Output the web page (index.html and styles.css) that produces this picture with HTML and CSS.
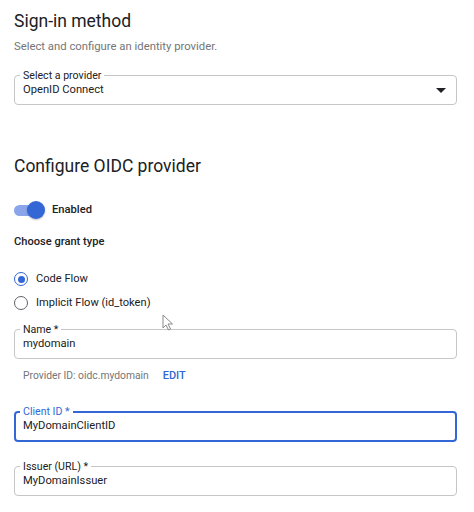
FILE: index.html
```html
<!DOCTYPE html>
<html>
<head>
<meta charset="utf-8">
<link rel="stylesheet" href="styles.css">
</head>
<body>
<main class="page">
  <h1 class="title">Sign-in method</h1>
  <p class="subtitle">Select and configure an identity provider.</p>
  <fieldset class="field field-select">
    <legend class="field-label">Select a provider</legend>
    <div class="field-row">
      <span class="field-value">OpenID Connect</span>
      <svg class="caret" width="10" height="5" viewBox="0 0 10 5"><path d="M0 0h10L5 5z" fill="#202124"/></svg>
    </div>
  </fieldset>

  <h2 class="title title-config">Configure OIDC provider</h2>

  <div class="toggle-row">
    <span class="switch"><span class="switch-track"></span><span class="switch-thumb"></span></span>
    <span class="toggle-label">Enabled</span>
  </div>

  <div class="section-label">Choose grant type</div>

  <div class="radios">
    <div class="radio-row"><span class="radio radio-on"></span><span class="radio-text">Code Flow</span></div>
    <div class="radio-row"><span class="radio"></span><span class="radio-text">Implicit Flow (id_token)</span></div>
  </div>

  <div class="name-block">
    <fieldset class="field field-name">
      <legend class="field-label">Name *</legend>
      <div class="field-row"><span class="field-value">mydomain</span></div>
    </fieldset>
    <svg class="cursor" width="12" height="17" viewBox="0 0 12 17"><path d="M1 1v13l3-3 2.5 5 2-1-2.5-5h4.5z" fill="#fff" stroke="#8a8a8a" stroke-width="1"/></svg>
  </div>

  <div class="provider-id">
    <span class="provider-text">Provider ID: oidc.mydomain</span>
    <span class="edit">EDIT</span>
  </div>

  <fieldset class="field field-focus">
    <legend class="field-label">Client ID *</legend>
    <div class="field-row"><span class="field-value">MyDomainClientID</span></div>
  </fieldset>

  <fieldset class="field field-issuer">
    <legend class="field-label">Issuer (URL) *</legend>
    <div class="field-row"><span class="field-value">MyDomainIssuer</span></div>
  </fieldset>
</main>
</body>
</html>
```

FILE: styles.css
```css
* { box-sizing: border-box; }
html, body { margin: 0; background: #fff; }
body {
  font-family: Roboto, "Liberation Sans", Arial, sans-serif;
  color: #202124;
}
.page {
  display: flex;
  flex-direction: column;
  padding: 9px 17px 0 14px;
}
.title {
  margin: 0;
  font-size: 17.5px;
  line-height: 24px;
  font-weight: 400;
  color: #202124;
}
.title-config { margin-top: 49px; }
.subtitle {
  margin: 6px 0 0;
  font-size: 11.3px;
  line-height: 16px;
  color: #757575;
}
.field {
  margin: 0;
  border: 1px solid #c6c6c6;
  border-radius: 4px;
  padding: 0 7px 6px 8px;
  min-width: 0;
}
.field-label {
  font-size: 10.6px;
  line-height: 13px;
  padding: 0 3px;
  margin-left: -3px;
  color: #202124;
}
.field-row {
  display: flex;
  align-items: center;
  justify-content: space-between;
  height: 16px;
}
.field-value {
  font-size: 11.2px;
  line-height: 16px;
  color: #202124;
}
.field-select { margin-top: 14px; }
.caret { margin-right: 3px; }

.toggle-row {
  display: flex;
  align-items: center;
  gap: 7px;
  margin-top: 23px;
  height: 18px;
}
.switch {
  position: relative;
  width: 31px;
  height: 18px;
  display: flex;
  align-items: center;
}
.switch-track {
  width: 29px;
  height: 11px;
  border-radius: 6px;
  background: #8ba5ea;
}
.switch-thumb {
  position: absolute;
  right: 0;
  top: 0;
  width: 18px;
  height: 18px;
  border-radius: 50%;
  background: #3367d6;
  box-shadow: 0 1px 2px rgba(0,0,0,0.25);
}
.toggle-label {
  font-size: 11.2px;
  font-weight: 500;
  line-height: 16px;
}
.section-label {
  margin-top: 15px;
  font-size: 11.1px;
  font-weight: 500;
  line-height: 16px;
}
.radios {
  display: flex;
  flex-direction: column;
  margin-top: 17px;
}
.radio-row {
  display: flex;
  align-items: center;
  gap: 8px;
  height: 24px;
}
.radio {
  width: 14px;
  height: 14px;
  border-radius: 50%;
  border: 1.5px solid #5f6368;
  display: flex;
  align-items: center;
  justify-content: center;
}
.radio-on { border-color: #3367d6; }
.radio-on::after {
  content: "";
  width: 7px;
  height: 7px;
  border-radius: 50%;
  background: #3367d6;
}
.radio-text {
  font-size: 11.1px;
  line-height: 16px;
}
.name-block {
  position: relative;
  margin-top: 8px;
}
.cursor {
  position: absolute;
  left: 148px;
  top: -9px;
}
.provider-id {
  display: flex;
  align-items: baseline;
  gap: 14px;
  margin-top: 9px;
  padding-left: 9px;
  line-height: 16px;
}
.provider-text {
  font-size: 10.3px;
  color: #757575;
}
.edit {
  font-size: 11px;
  font-weight: 500;
  color: #3367d6;
}
.field-focus {
  margin-top: 21px;
  border: 2px solid #3367d6;
  padding-left: 7px;
}
.field-focus .field-label { color: #3367d6; }
.field-issuer { margin-top: 18px; }
```
